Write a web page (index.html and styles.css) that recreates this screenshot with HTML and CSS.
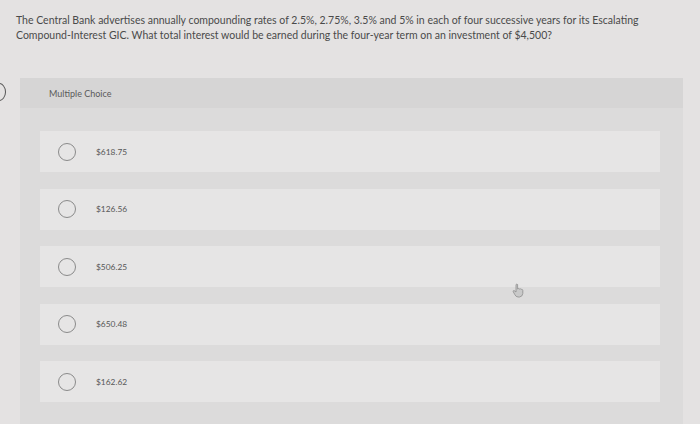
FILE: index.html
```html
<!DOCTYPE html>
<html>
<head>
<meta charset="utf-8">
<link rel="stylesheet" href="styles.css">
</head>
<body>
<div class="page">
  <p class="question">The Central Bank advertises annually compounding rates of 2.5%, 2.75%, 3.5% and 5% in each of four successive years for its Escalating Compound-Interest GIC. What total interest would be earned during the four-year term on an investment of $4,500?</p>
  <div class="edge-ring"></div>
  <div class="panel">
    <div class="panel-head">Multiple Choice</div>
    <div class="options">
      <div class="option"><span class="radio"></span><span class="label">$618.75</span></div>
      <div class="option"><span class="radio"></span><span class="label">$126.56</span></div>
      <div class="option"><span class="radio"></span><span class="label">$506.25</span></div>
      <div class="option"><span class="radio"></span><span class="label">$650.48</span></div>
      <div class="option"><span class="radio"></span><span class="label">$162.62</span></div>
    </div>
  </div>
  <svg class="cursor" width="12" height="15" viewBox="0 0 12 15">
    <path d="M4 1.5 Q4.8 0.8 5.6 1.5 L5.6 6 L6.2 5.6 Q7 5.3 7.5 6 L8 5.8 Q8.8 5.6 9.2 6.4 L9.6 6.3 Q10.6 6.3 10.8 7.4 L10.8 10.5 Q10.5 13.5 7.6 14 L6 14 Q3.8 13.8 2.8 11.6 L1.2 8.6 Q1 7.6 2 7.5 L4 9 Z" fill="#c9c9c9" stroke="#8d8d8d" stroke-width="0.8"/>
  </svg>
</div>
</body>
</html>
```
FILE: styles.css
```css
html, body {
  margin: 0;
  padding: 0;
  background: #e4e2e2;
}
.page {
  position: relative;
  width: 700px;
  height: 424px;
  overflow: hidden;
  font-family: Lato, "Open Sans", Arial, sans-serif;
}
.question {
  margin: 0;
  padding: 13px 30px 0 16px;
  font-size: 10.5px;
  line-height: 15px;
  color: #4a4a4a;
}
.edge-ring {
  position: absolute;
  left: -8px;
  top: 83px;
  width: 12px;
  height: 16px;
  border: 1.5px solid #555;
  border-radius: 50%;
}
.panel {
  margin: 35px 17px 0 20px;
  background: #dcdbdb;
  height: 400px;
}
.panel-head {
  height: 30px;
  display: flex;
  align-items: center;
  padding-left: 29px;
  background: #d6d5d5;
  font-size: 9px;
  color: #5a5a5a;
}
.options {
  display: flex;
  flex-direction: column;
  gap: 16.5px;
  padding: 23px 23px 0 20px;
}
.option {
  height: 41px;
  display: flex;
  align-items: center;
  padding-left: 18px;
  background: #e6e5e5;
}
.radio {
  width: 18px;
  height: 18px;
  border: 1px solid #8a8a8a;
  border-radius: 50%;
  box-sizing: border-box;
  flex: none;
}
.label {
  margin-left: 20px;
  font-size: 8.4px;
  color: #575757;
}
.cursor {
  position: absolute;
  left: 512px;
  top: 283px;
}
```
